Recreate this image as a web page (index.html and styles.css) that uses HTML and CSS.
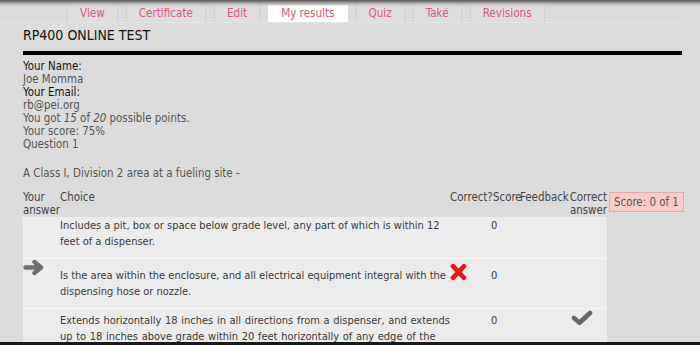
FILE: index.html
```html
<!DOCTYPE html>
<html>
<head>
<meta charset="utf-8">
<link rel="stylesheet" href="styles.css">
</head>
<body>
<div class="topshade"></div>
<nav class="tabs">
  <a class="tab">View</a>
  <a class="tab">Certificate</a>
  <a class="tab">Edit</a>
  <a class="tab active">My results</a>
  <a class="tab">Quiz</a>
  <a class="tab">Take</a>
  <a class="tab">Revisions</a>
</nav>
<main class="main">
  <h1 class="title">RP400 ONLINE TEST</h1>
  <div class="rule"></div>
  <div class="info">
    <div class="label">Your Name:</div>
    <div>Joe Momma</div>
    <div class="label">Your Email:</div>
    <div>rb@pei.org</div>
    <div>You got <em>15</em> of <em>20</em> possible points.</div>
    <div>Your score: 75%</div>
    <div>Question 1</div>
    <div class="question">A Class I, Division 2 area at a fueling site -</div>
  </div>
  <div class="results">
    <table class="answers">
      <thead>
        <tr>
          <th class="c-your">Your answer</th>
          <th class="c-choice">Choice</th>
          <th class="c-correct">Correct?</th>
          <th class="c-score">Score</th>
          <th class="c-feedback">Feedback</th>
          <th class="c-answer">Correct answer</th>
        </tr>
      </thead>
      <tbody>
        <tr>
          <td class="c-your"></td>
          <td class="c-choice">Includes a pit, box or space below grade level, any part of which is within 12<br>feet of a dispenser.</td>
          <td class="c-correct"></td>
          <td class="c-score">0</td>
          <td class="c-feedback"></td>
          <td class="c-answer"></td>
        </tr>
        <tr>
          <td class="c-your"><svg class="icon" width="22" height="21" viewBox="0 0 22 21"><path d="M2.5 7.5 H17.5 M11.5 2 L18 7.5 L11.5 13" fill="none" stroke="#6e6e6e" stroke-width="4.4" stroke-linecap="round" stroke-linejoin="round"/></svg></td>
          <td class="c-choice">Is the area within the enclosure, and all electrical equipment integral with the<br>dispensing hose or nozzle.</td>
          <td class="c-correct"><svg class="icon" width="17" height="18" viewBox="0 0 17 18"><path d="M3 3.2 L14 14.8 M14 3.2 L3 14.8" fill="none" stroke="#e8161b" stroke-width="4.6" stroke-linecap="round"/></svg></td>
          <td class="c-score">0</td>
          <td class="c-feedback"></td>
          <td class="c-answer"></td>
        </tr>
        <tr>
          <td class="c-your"></td>
          <td class="c-choice wide">Extends horizontally 18 inches in all directions from a dispenser, and extends<br>up to 18 inches above grade within 20 feet horizontally of any edge of the<br>dispenser.</td>
          <td class="c-correct"></td>
          <td class="c-score">0</td>
          <td class="c-feedback"></td>
          <td class="c-answer"><svg class="icon" width="24" height="16" viewBox="0 0 24 16"><path d="M4 8 L9.5 12.8 L20 3" fill="none" stroke="#666" stroke-width="4.6" stroke-linecap="round" stroke-linejoin="round"/></svg></td>
        </tr>
      </tbody>
    </table>
    <div class="badge">Score: 0 of 1</div>
  </div>
</main>
<div class="bottomedge"></div>
</body>
</html>
```
FILE: styles.css
```css
html, body {
  margin: 0;
  padding: 0;
  background: #dcdcdc;
  overflow: hidden;
}
body {
  font-family: "DejaVu Sans Condensed", "DejaVu Sans", sans-serif;
  font-stretch: condensed;
  color: #555;
  font-size: 11.4px;
}
.topshade {
  position: fixed;
  top: 0;
  left: 0;
  right: 0;
  height: 7px;
  background: linear-gradient(to bottom, rgba(40,40,40,0.75), rgba(120,120,120,0.25) 60%, rgba(220,220,220,0));
  z-index: 5;
}
.bottomedge {
  position: fixed;
  left: 0;
  right: 0;
  bottom: 0;
  height: 3px;
  background: #1a1a1a;
}
.tabs {
  display: flex;
  width: 613px;
  padding: 5px 0 0 67px;
  border-bottom: 1px solid #e6e6e6;
}
.tab {
  display: block;
  height: 17px;
  line-height: 17px;
  padding: 0 12px;
  margin-right: 8px;
  background: #dedede;
  border-left: 1px solid #cfcfcf;
  border-right: 1px solid #cfcfcf;
  color: #d85a80;
  font-size: 11.6px;
}
.tab.active {
  background: #fff;
  border-color: #fff;
}
.main {
  padding: 0 18px 0 23px;
}
.title {
  margin: 2px 0 0;
  font-size: 14px;
  line-height: 20px;
  font-weight: normal;
  color: #111;
}
.rule {
  height: 4px;
  background: #000;
  margin-top: 6px;
  width: 659px;
}
.info {
  margin-top: 5px;
  line-height: 13px;
}
.info .label {
  color: #111;
}
.question {
  margin-top: 16px;
}
.results {
  display: flex;
  align-items: flex-start;
  margin-top: 6px;
  gap: 2px;
}
.answers {
  border-collapse: collapse;
  width: 584px;
  table-layout: fixed;
}
.answers th {
  font-weight: normal;
  text-align: left;
  vertical-align: top;
  line-height: 13px;
  padding: 5px 0 0;
  color: #444;
}
.answers th.c-answer {
  text-align: right;
}
.answers td {
  background: #ececec;
  vertical-align: baseline;
  font-size: 11px;
  line-height: 15.5px;
  padding: 1px 0 9px;
  color: #3a3a3a;
  border-top: 1px solid #f7f7f7;
  white-space: nowrap;
}
.answers tbody tr:first-child td {
  border-top: 0;
}
.c-your { width: 37px; }
.c-choice { width: 390px; }
.c-correct { width: 43px; }
.c-score { width: 27px; }
.c-feedback { width: 48px; }
.c-answer { width: 39px; }
.answers td.wide {
  word-spacing: 0.5px;
}
td.c-score {
  text-indent: -2px;
}
td.c-answer {
  padding-left: 2px;
}
.icon {
  display: inline-block;
  vertical-align: -2px;
}
.badge {
  background: #fdc9c9;
  border: 1px solid #e2aaaa;
  color: #555;
  padding: 2px 4px;
  line-height: 14px;
  white-space: nowrap;
  margin-top: 6px;
}
```
